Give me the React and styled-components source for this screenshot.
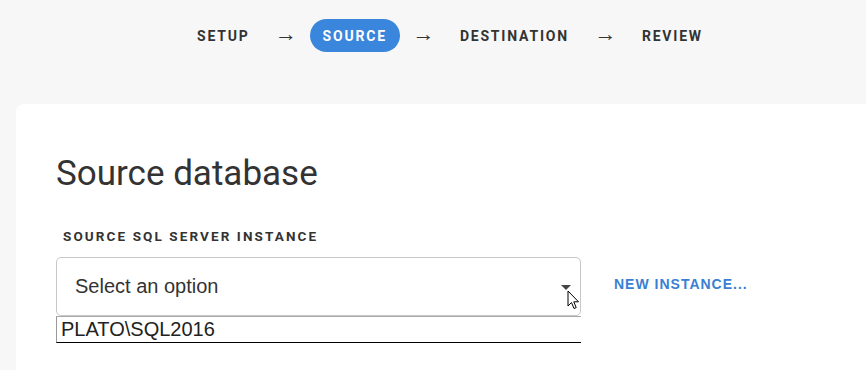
import React from "react";
import styled, { createGlobalStyle } from "styled-components";

const GlobalStyle = createGlobalStyle`
  body {
    margin: 0;
    background: #f7f7f7;
    font-family: Roboto, "Liberation Sans", sans-serif;
    overflow: hidden;
  }
`;

const Page = styled.div`
  width: 866px;
  height: 370px;
  overflow: hidden;
`;

const Stepper = styled.nav`
  display: flex;
  align-items: center;
  gap: 15px;
  padding: 19px 0 0 184px;
  height: 33px;
`;

const Step = styled.div`
  display: flex;
  align-items: center;
  height: 33px;
  padding: 0 13px;
  border-radius: 17px;
  font-size: 14px;
  font-weight: 700;
  letter-spacing: 1.8px;
  color: ${(p) => (p.$active ? "#fff" : "#333")};
  background: ${(p) => (p.$active ? "#3a86dc" : "transparent")};
`;

const Arrow = styled.span`
  display: flex;
  justify-content: center;
  width: 17px;
  padding-bottom: 4px;
  font-family: "Liberation Sans", Arial, sans-serif;
  font-size: 22px;
  line-height: 22px;
  color: #333;
`;

const Card = styled.section`
  margin: 52px 0 0 16px;
  background: #fff;
  border-top-left-radius: 8px;
  padding: 48px 0 0 40px;
  height: 300px;
`;

const Heading = styled.h1`
  margin: 0 0 32px;
  font-size: 35px;
  font-weight: 400;
  color: #333;
  line-height: 44px;
`;

const Label = styled.div`
  margin: 0 0 13px 7px;
  font-size: 13.5px;
  font-weight: 700;
  letter-spacing: 2.1px;
  color: #333;
`;

const Row = styled.div`
  display: flex;
  align-items: flex-start;
  gap: 33px;
`;

const SelectWrap = styled.div`
  position: relative;
  width: 525px;
`;

const SelectBox = styled.div`
  display: flex;
  align-items: center;
  justify-content: space-between;
  box-sizing: border-box;
  height: 59px;
  padding: 0 9px 0 18px;
  border: 1px solid #c8c8c8;
  border-radius: 5px;
  font-family: "Liberation Sans", Arial, sans-serif;
  font-size: 20px;
  color: #333;
`;

const Caret = styled.span`
  width: 0;
  height: 0;
  border-left: 5px solid transparent;
  border-right: 5px solid transparent;
  border-top: 5px solid #444;
  margin-top: 2px;
`;

const OptionList = styled.div`
  box-sizing: border-box;
  height: 27px;
  border-left: 1px solid #999;
  border-top: 1px solid #aaa;
  border-bottom: 1px solid #000;
  padding-left: 4px;
  font-family: "Liberation Sans", Arial, sans-serif;
  font-size: 20px;
  line-height: 24px;
  color: #222;
`;

const Cursor = styled.svg`
  position: absolute;
  left: 511px;
  top: 33px;
`;

const LinkButton = styled.a`
  margin-top: 19px;
  font-family: "Liberation Sans", Arial, sans-serif;
  font-size: 14px;
  font-weight: 700;
  letter-spacing: 1px;
  color: #3a7fd2;
  text-decoration: none;
`;

const steps = ["Setup", "Source", "Destination", "Review"];

export default function App() {
  return (
    <Page>
      <GlobalStyle />
      <Stepper>
        {steps.map((s, i) => (
          <React.Fragment key={s}>
            {i > 0 && <Arrow>→</Arrow>}
            <Step $active={s === "Source"}>{s.toUpperCase()}</Step>
          </React.Fragment>
        ))}
      </Stepper>
      <Card>
        <Heading>Source database</Heading>
        <Label>SOURCE SQL SERVER INSTANCE</Label>
        <Row>
          <SelectWrap>
            <SelectBox>
              <span>Select an option</span>
              <Caret />
            </SelectBox>
            <OptionList>PLATO\SQL2016</OptionList>
            <Cursor width="13" height="20" viewBox="0 0 13 20">
              <path
                d="M1 1 L1 16 L4.5 12.5 L7 18.5 L9.2 17.6 L6.8 11.8 L11.5 11.8 Z"
                fill="#fff"
                stroke="#000"
                strokeWidth="1"
                strokeLinejoin="round"
              />
            </Cursor>
          </SelectWrap>
          <LinkButton href="#">NEW INSTANCE...</LinkButton>
        </Row>
      </Card>
    </Page>
  );
}
